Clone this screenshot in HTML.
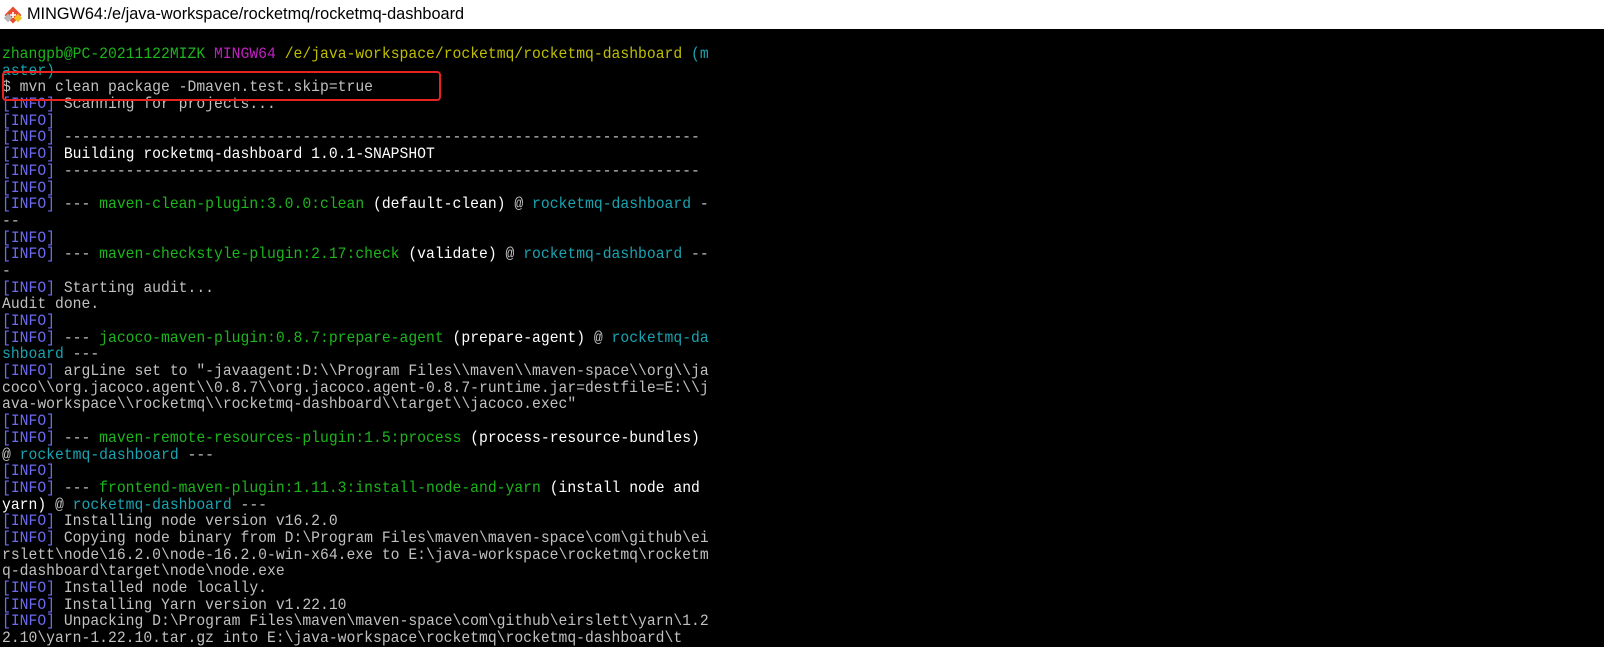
<!DOCTYPE html>
<html><head><meta charset="utf-8"><style>
html,body{margin:0;padding:0;width:1604px;height:646px;overflow:hidden;background:#000}
.tb{position:absolute;left:0;top:0;width:1604px;height:29px;background:#fff;font-family:"Liberation Sans",sans-serif;font-size:16.3px;color:#000}
.tb span{position:absolute;left:27px;top:5px}
.term{position:absolute;left:2px;top:46px;font-family:"Liberation Mono",monospace;font-size:16px;line-height:16.68px;color:#c0c0c0;white-space:pre;margin:0;transform:scaleX(0.92);transform-origin:0 0}
.i{color:#6b6bf0}.g{color:#1cb51c}.c{color:#1aa3b0}.w{color:#fff}.y{color:#bfbf00}.m{color:#c020c0}
.box{position:absolute;left:2px;top:71px;width:435px;height:26px;border:2.5px solid #e8231f;border-radius:4px}
</style></head><body>
<div class="tb"><svg style="position:absolute;left:4px;top:6px" width="18" height="18" viewBox="0 0 18 18"><rect x="3" y="3" width="12" height="12" transform="rotate(45 9 9)" fill="#e84d31"/><path d="M6 9h6M9 6v6" stroke="#fff" stroke-width="1.6"/><rect x="1" y="9" width="6" height="6" transform="rotate(45 4 12)" fill="#b8b8b8"/><rect x="11" y="9" width="6" height="6" transform="rotate(45 14 12)" fill="#f0c020"/></svg><span>MINGW64:/e/java-workspace/rocketmq/rocketmq-dashboard</span></div>
<pre class="term"><span class="g">zhangpb@PC-20211122MIZK</span> <span class="m">MINGW64</span> <span class="y">/e/java-workspace/rocketmq/rocketmq-dashboard</span> <span class="c">(m
aster)</span>
$ mvn clean package -Dmaven.test.skip=true
<span class="i">[INFO]</span> Scanning for projects...
<span class="i">[INFO]</span>
<span class="i">[INFO]</span> ------------------------------------------------------------------------
<span class="i">[INFO]</span> <span class="w">Building rocketmq-dashboard 1.0.1-SNAPSHOT</span>
<span class="i">[INFO]</span> ------------------------------------------------------------------------
<span class="i">[INFO]</span>
<span class="i">[INFO]</span> --- <span class="g">maven-clean-plugin:3.0.0:clean</span> <span class="w">(default-clean)</span> @ <span class="c">rocketmq-dashboard</span> -
--
<span class="i">[INFO]</span>
<span class="i">[INFO]</span> --- <span class="g">maven-checkstyle-plugin:2.17:check</span> <span class="w">(validate)</span> @ <span class="c">rocketmq-dashboard</span> --
-
<span class="i">[INFO]</span> Starting audit...
Audit done.
<span class="i">[INFO]</span>
<span class="i">[INFO]</span> --- <span class="g">jacoco-maven-plugin:0.8.7:prepare-agent</span> <span class="w">(prepare-agent)</span> @ <span class="c">rocketmq-da
shboard</span> ---
<span class="i">[INFO]</span> argLine set to "-javaagent:D:\\Program Files\\maven\\maven-space\\org\\ja
coco\\org.jacoco.agent\\0.8.7\\org.jacoco.agent-0.8.7-runtime.jar=destfile=E:\\j
ava-workspace\\rocketmq\\rocketmq-dashboard\\target\\jacoco.exec"
<span class="i">[INFO]</span>
<span class="i">[INFO]</span> --- <span class="g">maven-remote-resources-plugin:1.5:process</span> <span class="w">(process-resource-bundles)</span>
@ <span class="c">rocketmq-dashboard</span> ---
<span class="i">[INFO]</span>
<span class="i">[INFO]</span> --- <span class="g">frontend-maven-plugin:1.11.3:install-node-and-yarn</span> <span class="w">(install node and
yarn)</span> @ <span class="c">rocketmq-dashboard</span> ---
<span class="i">[INFO]</span> Installing node version v16.2.0
<span class="i">[INFO]</span> Copying node binary from D:\Program Files\maven\maven-space\com\github\ei
rslett\node\16.2.0\node-16.2.0-win-x64.exe to E:\java-workspace\rocketmq\rocketm
q-dashboard\target\node\node.exe
<span class="i">[INFO]</span> Installed node locally.
<span class="i">[INFO]</span> Installing Yarn version v1.22.10
<span class="i">[INFO]</span> Unpacking D:\Program Files\maven\maven-space\com\github\eirslett\yarn\1.2
2.10\yarn-1.22.10.tar.gz into E:\java-workspace\rocketmq\rocketmq-dashboard\t</pre>
<div class="box"></div>
</body></html>
